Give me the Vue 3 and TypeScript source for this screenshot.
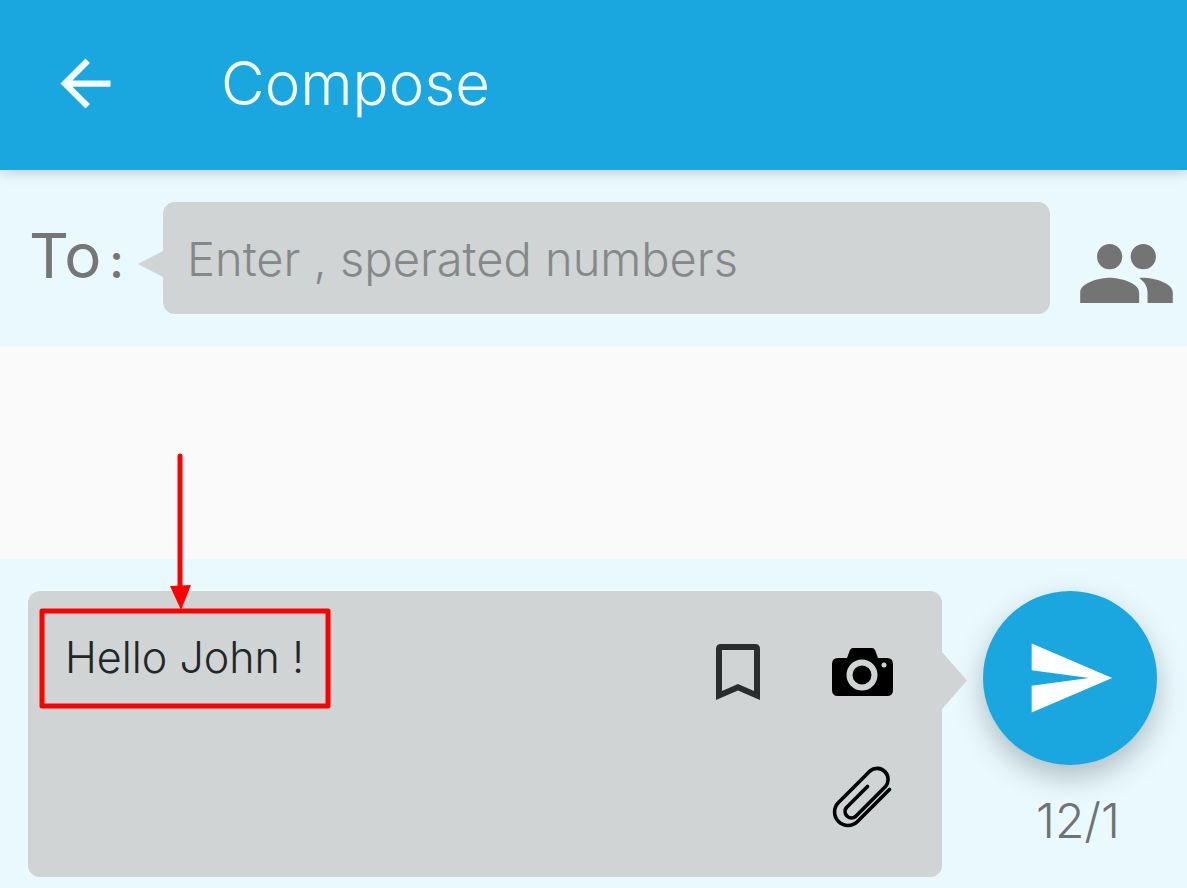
<script setup lang="ts">
import { computed, ref } from 'vue'

const recipients = ref('')
const message = ref('Hello John !')
const counter = computed(() => `${message.value.length}/1`)
</script>

<template>
  <main class="screen">
    <header class="bar">
      <button class="icon-btn back" type="button" aria-label="Back">
        <svg width="75" height="75" viewBox="0 0 24 24" fill="#f4fdff">
          <path d="M20 11H7.83l5.59-5.59L12 4l-8 8 8 8 1.41-1.41L7.83 13H20z" />
        </svg>
      </button>
      <h1 class="title">Compose</h1>
    </header>

    <section class="to">
      <label class="to-label" for="recipients">To<span class="colon">:</span></label>
      <div class="field">
        <input id="recipients" v-model="recipients" type="text" placeholder="Enter , sperated numbers" />
      </div>
      <button class="icon-btn contacts" type="button" aria-label="Contacts">
        <svg width="101" height="101" viewBox="0 0 24 24" fill="#747474">
          <path d="M16 11c1.66 0 2.99-1.34 2.99-3S17.66 5 16 5s-3 1.34-3 3 1.34 3 3 3zM8 11c1.66 0 2.99-1.34 2.99-3S9.66 5 8 5 5 6.34 5 8s1.34 3 3 3zM8 13c-2.33 0-7 1.17-7 3.5V19h14v-2.5C15 14.17 10.33 13 8 13zM16 13c-.29 0-.62.02-.97.05 1.16.84 1.97 1.97 1.97 3.45V19h6v-2.5c0-2.33-4.67-3.5-7-3.5z" />
        </svg>
      </button>
    </section>

    <section class="thread"></section>

    <section class="composer">
      <div class="bubble">
        <textarea v-model="message" aria-label="Message"></textarea>
        <div class="tools">
          <button class="icon-btn" type="button" aria-label="Saved messages">
            <svg width="44" height="56" viewBox="0 0 44 56">
              <path fill="#2a2d2c" fill-rule="evenodd" d="M5 0H39Q44 0 44 5V56L22 46.500 0 56V5Q0 0 5 0ZM6 6V47L22 40 38 47V6Z" />
            </svg>
          </button>
          <button class="icon-btn" type="button" aria-label="Camera">
            <svg width="62" height="50" viewBox="0 0 62 50">
              <path d="M7 11H16L19 3Q20 1 22 1H41Q43 1 44 3L47 11H56Q62 11 62 17V43Q62 49 56 49H7Q1 49 1 43V17Q1 11 7 11Z" />
              <circle cx="31" cy="28" r="12.500" fill="#000" stroke="#d0d4d4" stroke-width="6" />
              <circle cx="53" cy="18" r="2.500" fill="#d0d4d4" />
            </svg>
          </button>
          <button class="icon-btn clip" type="button" aria-label="Attach file">
            <svg width="60" height="62" viewBox="0 0 60 62" fill="none" stroke="#000" stroke-width="3.600" stroke-linecap="round" stroke-linejoin="round">
              <path d="M35.500 20.500L14.500 41.500A6.400 6.400 0 0 0 23.500 50.500L53.500 20.500A11 11 0 0 0 38 5L6.500 36.500A13.400 13.400 0 0 0 25.500 55.500L57.500 23.500" />
            </svg>
          </button>
        </div>

        <svg class="callout" width="294" height="262" viewBox="0 0 294 262" fill="none" stroke="#f00" stroke-width="5" aria-hidden="true">
          <rect x="4" y="160" width="286" height="95" stroke-linejoin="round" />
          <path d="M142 5V136" stroke-linecap="round" />
          <path d="M132 135L153 134 143 159Z" fill="#f00" stroke="none" />
        </svg>
      </div>

      <div class="side">
        <button class="send" type="button" aria-label="Send">
          <svg width="92" height="92" viewBox="0 0 24 24" fill="#fff">
            <path d="M2.010 21L23 12 2.010 3 2 10l15 2-15 2z" />
          </svg>
        </button>
        <output class="count">{{ counter }}</output>
      </div>
    </section>
  </main>
</template>

<style>
body {
  margin: 0;
}
</style>

<style scoped>
.screen {
  display: flex;
  flex-direction: column;
  min-height: 100vh;
  background: #fafafa;
  font-family: Inter, "Liberation Sans", sans-serif;
  font-weight: 300;
}

.icon-btn {
  display: flex;
  align-items: center;
  justify-content: center;
  padding: 0;
  border: 0;
  background: none;
  cursor: pointer;
}

.icon-btn svg {
  display: block;
  flex: none;
}

.bar {
  position: relative;
  display: flex;
  align-items: center;
  gap: 96px;
  box-sizing: border-box;
  height: 170px;
  padding: 0 48px 4px;
  background: #1aa7e0;
  box-shadow: 0 2px 12px rgba(40, 70, 80, 0.25);
}

.title {
  margin: 0;
  padding-left: 2px;
  color: #f4fdff;
  font-size: 60px;
  font-weight: 300;
  line-height: 72px;
}

.to {
  display: flex;
  align-items: center;
  box-sizing: border-box;
  height: 176px;
  padding: 0 10px 0 29px;
  background: #eaf9fe;
}

.to-label {
  flex: none;
  width: 134px;
  color: #747776;
  font-size: 62px;
  font-weight: 400;
  line-height: 72px;
}

.colon {
  margin-left: 8px;
  font-size: 48px;
  font-weight: 500;
}

.field {
  position: relative;
  flex: 1;
  min-width: 0;
  height: 112px;
  border-radius: 12px;
  background: #d0d4d4;
}

.field::before {
  content: "";
  position: absolute;
  top: 49px;
  right: 100%;
  width: 25px;
  height: 26px;
  background: #d0d4d4;
  clip-path: polygon(0 50%, 100% 0, 100% 100%);
}

.field input {
  box-sizing: border-box;
  width: 100%;
  height: 100%;
  padding: 0 24px;
  border: 0;
  outline: 0;
  background: none;
  color: #333;
  font: inherit;
  font-size: 47px;
}

.field input::placeholder {
  color: #858888;
  opacity: 1;
}

.contacts {
  flex: none;
  margin-top: 30px;
  margin-left: 26px;
}

.thread {
  flex: 1;
}

.composer {
  display: flex;
  align-items: flex-start;
  gap: 41px;
  padding: 32px 30px 11px 28px;
  background: #eaf9fe;
}

.bubble {
  position: relative;
  display: flex;
  align-items: center;
  flex: 1;
  min-width: 0;
  min-height: 286px;
  padding-right: 18px;
  box-sizing: border-box;
  border-radius: 12px;
  background: #d0d4d4;
}

.bubble::after {
  content: "";
  position: absolute;
  top: 61px;
  left: 100%;
  width: 25px;
  height: 57px;
  background: #d0d4d4;
  clip-path: polygon(0 0, 100% 50%, 0 100%);
}

.bubble textarea {
  flex: 1;
  align-self: stretch;
  min-width: 0;
  padding: 38px 0 0 37px;
  border: 0;
  outline: 0;
  resize: none;
  background: none;
  color: #222625;
  font: inherit;
  font-size: 43px;
  line-height: 56px;
}

.tools {
  display: grid;
  grid-template-columns: repeat(2, 124px);
  grid-template-rows: repeat(2, 125px);
}

.clip {
  grid-column: 2;
}

.callout {
  position: absolute;
  top: -140px;
  left: 10px;
  pointer-events: none;
}

.side {
  display: flex;
  flex-direction: column;
  align-items: center;
  gap: 28px;
}

.send {
  display: flex;
  align-items: center;
  justify-content: center;
  width: 174px;
  height: 174px;
  padding: 0;
  border: 0;
  border-radius: 50%;
  background: #1aa7e0;
  box-shadow: 0 12px 28px rgba(60, 80, 80, 0.35);
  cursor: pointer;
}

.count {
  padding-left: 16px;
  color: #6f7373;
  font-size: 48px;
  line-height: 56px;
}
</style>
